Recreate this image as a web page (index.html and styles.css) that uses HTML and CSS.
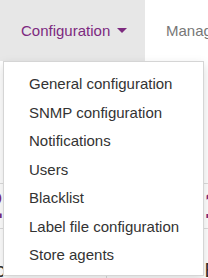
FILE: index.html
```
<!DOCTYPE html>
<html lang="en">
<head>
  <meta charset="UTF-8" />
  <title>Configuration</title>
  <link rel="stylesheet" href="styles.css">
</head>
<body>
  <nav class="navbar">
    <div class="nav-item activo">
      Configuration <span class="caret"></span>
      <ul class="dropdown">
        <li>General configuration</li>
        <li>SNMP configuration</li>
        <li>Notifications</li>
        <li>Users</li>
        <li>Blacklist</li>
        <li>Label file configuration</li>
        <li>Store agents</li>
      </ul>
    </div>
    <div class="nav-item">Management</div>
  </nav>

  <div class="contenido">
    <div class="fila cabecera">
      <div class="celda"></div>
    </div>
    <div class="fila stats">
      <div class="celda izquierda"><span class="numero">23</span></div>
      <div class="celda derecha"><span class="numero">15</span></div>
    </div>
    <div class="fila">
      <div class="celda texto izquierda">Ec</div>
      <div class="celda texto derecha">Err</div>
    </div>
  </div>
</body>
</html>
```

FILE: styles.css
```
* {
  box-sizing: border-box;
}

html, body {
  margin: 0;
  padding: 0;
  font-family: 'Liberation Sans', Arial, sans-serif;
  background-color: #fff;
  overflow: hidden;
}

.navbar {
  display: flex;
  height: 61px;
  background-color: #fff;
}

.nav-item {
  position: relative;
  display: flex;
  align-items: center;
  padding: 0 20px 0 21px;
  font-size: 15px;
  color: #777;
  white-space: nowrap;
}

.nav-item.activo {
  background-color: #e7e7e7;
  color: #7d2a7f;
  width: 145px;
}

.caret {
  display: inline-block;
  margin-left: 7px;
  border-top: 5px solid #7d2a7f;
  border-left: 5px solid transparent;
  border-right: 5px solid transparent;
  vertical-align: middle;
}

.dropdown {
  position: absolute;
  top: 61px;
  left: 3px;
  width: 201px;
  margin: 0;
  padding: 8px 0 5px;
  list-style: none;
  background-color: #fff;
  border: 1px solid #d5d5d5;
  box-shadow: 0 4px 10px rgba(0, 0, 0, 0.15);
  z-index: 10;
}

.dropdown li {
  padding: 4px 10px 4px 25px;
  line-height: 20.5px;
  font-size: 15px;
  color: #333;
}

.fila {
  display: flex;
  border-bottom: 1px solid #ddd;
}

.cabecera {
  height: 123px;
}

.celda {
  flex: 1;
  overflow: hidden;
  white-space: nowrap;
}

.stats .celda {
  height: 44px;
  padding-top: 6px;
}

.numero {
  font-size: 38px;
  font-weight: bold;
  color: #7d2a7f;
  line-height: 30px;
}

.izquierda {
  direction: rtl;
  text-align: left;
  margin-left: -18px;
}

.derecha {
  text-align: left;
  padding-left: 98px;
  margin-right: -120px;
}

.texto {
  font-size: 20px;
  color: #333;
  padding-top: 30px;
  height: 50px;
}

.fila:last-child .izquierda {
  border-right: 1px solid #ddd;
}
```
